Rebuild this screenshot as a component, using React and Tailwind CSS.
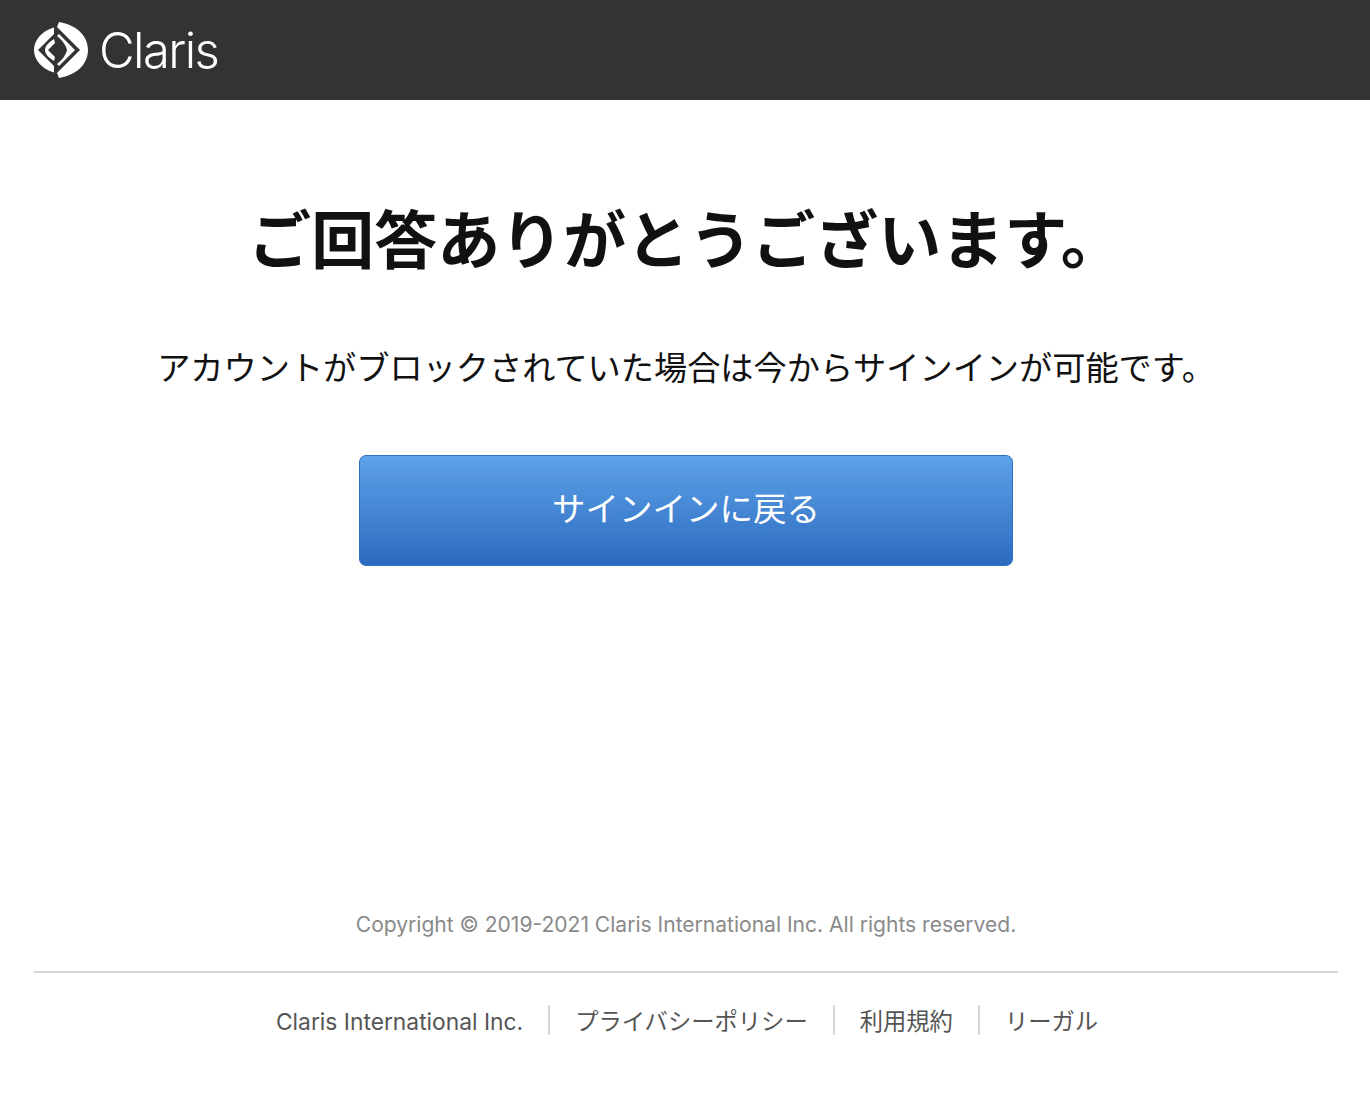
const jp = { fontFamily: '"Inter", "Noto Sans CJK JP", sans-serif' };

function Logo() {
  return (
    <svg width="54" height="56" viewBox="0 0 54 56" className="shrink-0" fill="#fff">
      <path d="M25 0 C43 3 54 14 54 28 C54 42 43 53 25 56 L23 51 L46 28 L23 5 Z" />
      <path d="M25 12 L41 28 L25 44 L23 42 C28 38 32 33 33 28 C32 23 28 18 23 14 Z" />
      <path d="M20 5.5 C8 9 0 18 0 28 C0 38 8 47 20 50.5 L20 44 L4 28 L20 12 Z" />
      <path d="M20 17 C15 20 11 24 11 28 C11 32 15 36 20 39 L21 35 L14 28 L21 21 Z" />
    </svg>
  );
}

export default function App() {
  return (
    <div className="min-h-[1098px] bg-white flex flex-col" style={jp}>
      <header className="h-[100px] bg-[#333333] flex items-center pl-[34px] gap-[11px]">
        <Logo />
        <span className="text-[49px] leading-none text-white font-light tracking-[-1.6px]">Claris</span>
      </header>

      <main className="flex flex-col items-center pl-[2px]">
        <h1 className="mt-[100px] text-[63px] leading-[80px] font-bold text-[#111111]">ご回答ありがとうございます。</h1>
        <p className="mt-[65px] text-[33.2px] leading-[46px] text-[#111111]">アカウントがブロックされていた場合は今からサインインが可能です。</p>
        <button className="mt-[64px] w-[654px] h-[111px] pb-[2px] rounded-[7px] border border-[#2f6fc4] bg-gradient-to-b from-[#5ea2e8] to-[#2b6bbf] text-white text-[33.5px]">
          サインインに戻る
        </button>
      </main>

      <footer className="mt-[345px] pl-[34px] pr-[32px] flex flex-col items-center">
        <p className="text-[21.05px] leading-[28px] text-[#8a8a8a]">Copyright © 2019-2021 Claris International Inc. All rights reserved.</p>
        <div className="mt-[32px] w-full border-t-2 border-[#d6d6d6] flex justify-center pt-[32px] pl-[2px] text-[23.3px] leading-[33px] text-[#555555]">
          <span className="h-[30px] pr-[25px] border-r-2 border-[#d6d6d6] text-[22.8px]">Claris International Inc.</span>
          <span className="h-[30px] px-[25px] border-r-2 border-[#d6d6d6]">プライバシーポリシー</span>
          <span className="h-[30px] px-[25px] border-r-2 border-[#d6d6d6]">利用規約</span>
          <span className="h-[30px] pl-[25px]">リーガル</span>
        </div>
      </footer>
    </div>
  );
}
